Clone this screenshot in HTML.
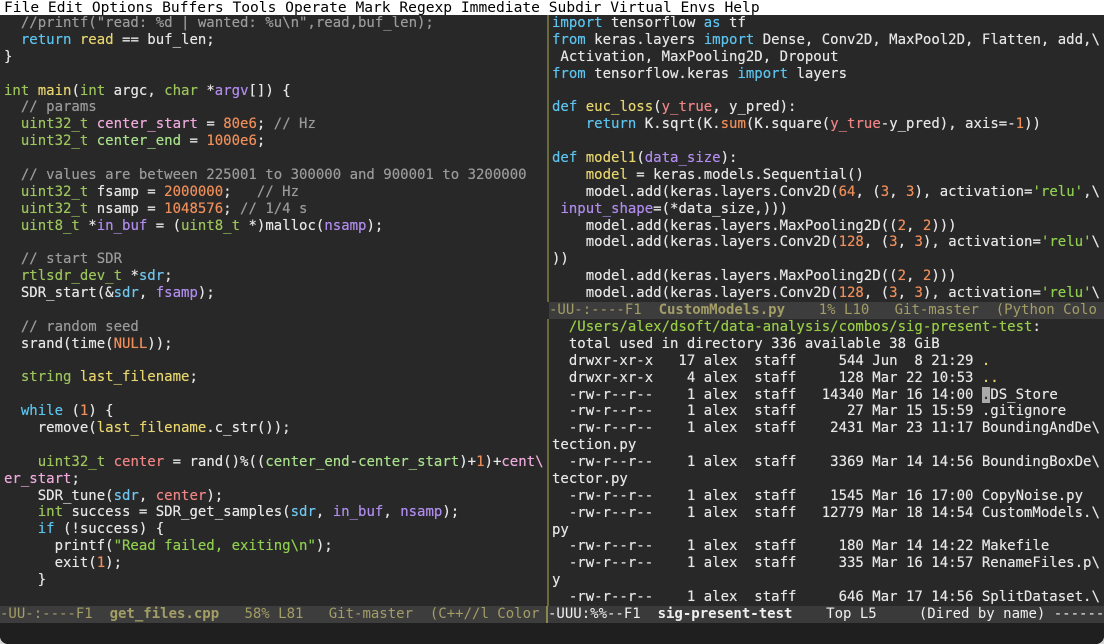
<!DOCTYPE html>
<html><head><meta charset="utf-8"><style>
html,body{margin:0;padding:0;background:#d8d8d8;}
#w{position:relative;width:1104px;height:644px;overflow:hidden;background:#282828;border-radius:0 0 8px 8px;}
#menu{position:absolute;left:0;top:0;width:1104px;height:15px;background:#fff;color:#000;font:14.6px/15px "DejaVu Sans Mono",monospace;padding-left:4px;white-space:pre;}
pre{margin:0;position:absolute;font:14px/16.88px "DejaVu Sans Mono","Liberation Mono",monospace;color:#e6e6e6;white-space:pre;text-shadow:0 0 0.4px currentColor;}
.ml{position:absolute;height:17px;background:#3d3d3d;font:14px/17px "DejaVu Sans Mono",monospace;white-space:pre;color:#a39d66;overflow:hidden;}
.k{color:#5cc3ee}.t{color:#9cc45c}.c{color:#9a9a9a}.n{color:#ee8e5a}.v{color:#e6d46e}.p{color:#b08ced}.b{color:#70c6ee}.r{color:#ee8484}.pk{color:#eeaadc}.g{color:#a9e08c}.s{color:#8fce4e}.dp{color:#98cc48}
#echo{position:absolute;left:0;top:623px;width:1104px;height:21px;background:#1f1f1f;}
.vb{position:absolute;left:547px;width:2px;background:#6b6a3c;}
</style></head><body><div id="w">
<div id="menu">File Edit Options Buffers Tools Operate Mark Regexp Immediate Subdir Virtual Envs Help</div>
<pre style="left:4px;top:15px;width:541px;overflow:hidden"><span class="c">  //printf("read: %d | wanted: %u\n",read,buf_len);</span>
  <span class="k">return</span> <span class="v">read</span> == buf_len;
}

<span class="t">int</span> <span class="v">main</span>(<span class="t">int</span> argc, <span class="t">char</span> *<span class="p">argv</span>[]) {
<span class="c">  // params</span>
  <span class="t">uint32_t</span> <span class="pk">center_start</span> = <span class="n">80e6</span>; <span class="c">// Hz</span>
  <span class="t">uint32_t</span> <span class="g">center_end</span> = <span class="n">1000e6</span>;

<span class="c">  // values are between 225001 to 300000 and 900001 to 3200000</span>
  <span class="t">uint32_t</span> fsamp = <span class="n">2000000</span>;   <span class="c">// Hz</span>
  <span class="t">uint32_t</span> nsamp = <span class="n">1048576</span>; <span class="c">// 1/4 s</span>
  <span class="t">uint8_t</span> *<span class="p">in_buf</span> = (<span class="t">uint8_t</span> *)malloc(<span class="p">nsamp</span>);

<span class="c">  // start SDR</span>
  <span class="t">rtlsdr_dev_t</span> *<span class="b">sdr</span>;
  SDR_start(&amp;<span class="b">sdr</span>, <span class="p">fsamp</span>);

<span class="c">  // random seed</span>
  srand(time(<span class="n">NULL</span>));

  <span class="t">string</span> <span class="v">last_filename</span>;

  <span class="k">while</span> (<span class="n">1</span>) {
    remove(<span class="v">last_filename</span>.c_str());

    <span class="t">uint32_t</span> <span class="r">center</span> = rand()%((<span class="g">center_end</span>-<span class="g">center_start</span>)+<span class="n">1</span>)+<span class="pk">cent\</span>
<span class="pk">er_start</span>;
    SDR_tune(<span class="b">sdr</span>, <span class="r">center</span>);
    <span class="t">int</span> success = SDR_get_samples(<span class="b">sdr</span>, <span class="p">in_buf</span>, <span class="p">nsamp</span>);
    <span class="k">if</span> (!success) {
      printf(<span class="s">"Read failed, exiting\n"</span>);
      exit(<span class="n">1</span>);
    }</pre>
<div class="vb" style="top:15px;height:287px"></div>
<div class="vb" style="top:319px;height:287px"></div>
<pre style="left:552px;top:15px;width:552px;overflow:hidden"><span class="k">import</span> tensorflow <span class="k">as</span> tf
<span class="k">from</span> keras.layers <span class="k">import</span> Dense, Conv2D, MaxPool2D, Flatten, add,\
 Activation, MaxPooling2D, Dropout
<span class="k">from</span> tensorflow.keras <span class="k">import</span> layers

<span class="k">def</span> <span class="v">euc_loss</span>(<span class="r">y_true</span>, y_pred):
    <span class="k">return</span> K.sqrt(K.<span class="n">sum</span>(K.square(<span class="r">y_true</span>-y_pred), axis=-<span class="n">1</span>))

<span class="k">def</span> <span class="v">model1</span>(<span class="p">data_size</span>):
    <span class="v">model</span> = keras.models.Sequential()
    model.add(keras.layers.Conv2D(<span class="n">64</span>, (<span class="n">3</span>, <span class="n">3</span>), activation=<span class="s">'relu'</span>,\
 <span class="p">input_shape</span>=(*data_size,)))
    model.add(keras.layers.MaxPooling2D((<span class="n">2</span>, <span class="n">2</span>)))
    model.add(keras.layers.Conv2D(<span class="n">128</span>, (<span class="n">3</span>, <span class="n">3</span>), activation=<span class="s">'relu'</span>\
))
    model.add(keras.layers.MaxPooling2D((<span class="n">2</span>, <span class="n">2</span>)))
    model.add(keras.layers.Conv2D(<span class="n">128</span>, (<span class="n">3</span>, <span class="n">3</span>), activation=<span class="s">'relu'</span>\</pre>
<div class="ml" style="left:549px;top:302px;width:555px">-UU-:----F1  <b>CustomModels.py</b>    1% L10   Git-master  (Python Colo</div>
<pre style="left:552px;top:319px;width:552px;overflow:hidden">  <span class="dp">/Users/alex/dsoft/data-analysis/combos/sig-present-test</span>:
  total used in directory 336 available 38 GiB
  drwxr-xr-x   17 alex  staff     544 Jun  8 21:29 <span class="v">.</span>
  drwxr-xr-x    4 alex  staff     128 Mar 22 10:53 <span class="v">..</span>
  -rw-r--r--    1 alex  staff   14340 Mar 16 14:00 <span style="background:#aaa;color:#282828">.</span>DS_Store
  -rw-r--r--    1 alex  staff      27 Mar 15 15:59 .gitignore
  -rw-r--r--    1 alex  staff    2431 Mar 23 11:17 BoundingAndDe\
tection.py
  -rw-r--r--    1 alex  staff    3369 Mar 14 14:56 BoundingBoxDe\
tector.py
  -rw-r--r--    1 alex  staff    1545 Mar 16 17:00 CopyNoise.py
  -rw-r--r--    1 alex  staff   12779 Mar 18 14:54 CustomModels.\
py
  -rw-r--r--    1 alex  staff     180 Mar 14 14:22 Makefile
  -rw-r--r--    1 alex  staff     335 Mar 16 14:57 RenameFiles.p\
y
  -rw-r--r--    1 alex  staff     646 Mar 17 14:56 SplitDataset.\</pre>
<div class="ml" style="left:0;top:606px;width:546px">-UU-:----F1  <b>get_files.cpp</b>   58% L81   Git-master  (C++//l Color</div>
<div style="position:absolute;left:546px;top:606px;width:2px;height:17px;background:#8a8650"></div>
<div class="ml" style="left:548px;top:606px;width:556px;color:#f0f0f0;background:#3a3a3a">-UUU:%%--F1  <b>sig-present-test</b>    Top L5     (Dired by name) ------</div>
<div id="echo"></div>
</div></body></html>
